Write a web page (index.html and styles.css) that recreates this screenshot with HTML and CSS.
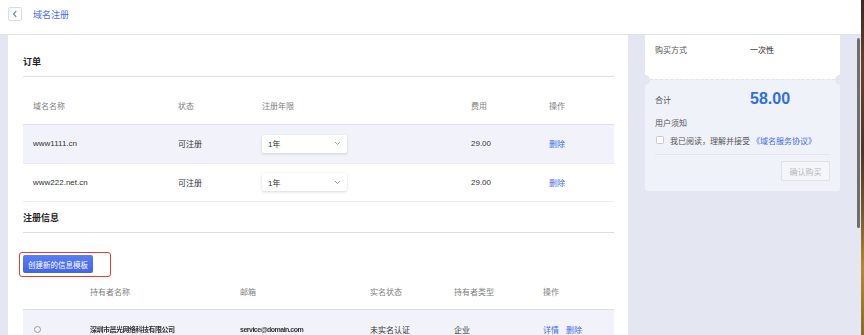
FILE: index.html
```html
<!DOCTYPE html>
<html lang="zh">
<head>
<meta charset="utf-8">
<title>域名注册</title>
<link rel="stylesheet" href="styles.css">
</head>
<body>
<div class="window">
  <header class="topbar">
    <span class="back">
      <svg width="6" height="8" viewBox="0 0 6 8"><path d="M4.3 1 L1.6 4 L4.3 7" fill="none" stroke="#5a6e9a" stroke-width="1.1"/></svg>
    </span>
    <span class="page-title">域名注册</span>
  </header>
  <div class="content">
    <main class="card">
      <section class="section">
        <h2 class="section-title">订单</h2>
        <div class="otable">
          <div class="orow ohead">
            <div class="cell">域名名称</div>
            <div class="cell">状态</div>
            <div class="cell">注册年限</div>
            <div class="cell">费用</div>
            <div class="cell">操作</div>
          </div>
          <div class="orow obody hl">
            <div class="cell">www1111.cn</div>
            <div class="cell">可注册</div>
            <div class="cell"><span class="select">1年<svg class="chev" width="7" height="5" viewBox="0 0 7 5"><path d="M1 1 L3.5 3.5 L6 1" fill="none" stroke="#999" stroke-width="0.9"/></svg></span></div>
            <div class="cell">29.00</div>
            <div class="cell"><a class="link">删除</a></div>
          </div>
          <div class="orow obody">
            <div class="cell">www222.net.cn</div>
            <div class="cell">可注册</div>
            <div class="cell"><span class="select">1年<svg class="chev" width="7" height="5" viewBox="0 0 7 5"><path d="M1 1 L3.5 3.5 L6 1" fill="none" stroke="#999" stroke-width="0.9"/></svg></span></div>
            <div class="cell">29.00</div>
            <div class="cell"><a class="link">删除</a></div>
          </div>
        </div>
      </section>
      <section class="section">
        <h2 class="section-title">注册信息</h2>
        <div class="btn-wrap">
          <button class="btn-primary">创建新的信息模板</button>
          <span class="mark"></span>
        </div>
        <div class="htable">
          <div class="hrow hhead">
            <div class="cell"></div>
            <div class="cell">持有者名称</div>
            <div class="cell">邮箱</div>
            <div class="cell">实名状态</div>
            <div class="cell">持有者类型</div>
            <div class="cell">操作</div>
          </div>
          <div class="hrow hbody hl">
            <div class="cell"><span class="radio"></span></div>
            <div class="cell"><span class="blur">深圳市晨光网络科技有限公司</span></div>
            <div class="cell"><span class="blur">service@domain.com</span></div>
            <div class="cell">未实名认证</div>
            <div class="cell">企业</div>
            <div class="cell"><a class="link">详情</a><a class="link">删除</a></div>
          </div>
        </div>
      </section>
    </main>
    <aside class="panel">
      <div class="panel-top">
        <div class="prow"><span class="plabel">购买方式</span><span class="pvalue">一次性</span></div>
      </div>
      <div class="panel-bottom">
        <div class="prow total"><span class="plabel">合计</span><span class="price">58.00</span></div>
        <div class="notice">用户须知</div>
        <label class="agree"><span class="checkbox"></span><span>我已阅读，理解并接受</span><a class="link agree-link">《域名服务协议》</a></label>
        <div class="actions"><button class="btn-disabled">确认购买</button></div>
      </div>
    </aside>
  </div>
  <span class="scrollbar"></span>
</div>
<div class="desktop"></div>
</body>
</html>
```

FILE: styles.css
```css
* { box-sizing: border-box; }
html, body { margin: 0; padding: 0; }
body {
  width: 864px;
  height: 335px;
  overflow: hidden;
  display: flex;
  font-family: "Liberation Sans", "Noto Sans CJK SC", sans-serif;
  font-size: 8px;
  color: #333;
}
.window {
  width: 861px;
  height: 335px;
  background: #e4e7f1;
  position: relative;
  display: flex;
  flex-direction: column;
}
.desktop {
  width: 3px;
  height: 335px;
  background: linear-gradient(180deg, #3a2a24 0%, #6b3e2a 20%, #4f3426 45%, #7a5a30 65%, #b38a2c 80%, #8a6a2a 100%);
}
.topbar {
  height: 35px;
  flex: none;
  background: #fff;
  border-bottom: 1px solid #dfe3ee;
  display: flex;
  align-items: flex-start;
  padding: 7px 0 0 8px;
  gap: 11px;
}
.back {
  width: 14px;
  height: 14px;
  border: 1px solid #d9dde8;
  border-radius: 2px;
  display: flex;
  align-items: center;
  justify-content: center;
}
.page-title {
  color: #4a6cf0;
  font-size: 9px;
  line-height: 14px;
  margin-top: 1px;
}
.content {
  flex: 1;
  display: flex;
  gap: 17px;
  padding-left: 8px;
  min-height: 0;
}
.card {
  width: 620px;
  background: #fff;
  padding: 11px 14px 0 15px;
}
.section-title {
  margin: 0;
  height: 31px;
  display: flex;
  align-items: center;
  font-size: 9px;
  font-weight: 700;
  color: #222;
  border-bottom: 1px solid #dcdfe8;
}
.otable { margin-top: 9px; }
.orow {
  display: grid;
  grid-template-columns: 145px 84px 209px 78px 1fr;
  align-items: center;
}
.hrow {
  display: grid;
  grid-template-columns: 57px 150px 130px 84px 89px 1fr;
  align-items: center;
}
.cell { padding-left: 10px; white-space: nowrap; }
.ohead, .hhead {
  height: 39px;
  color: #808080;
  border-bottom: 1px solid #dcdfe8;
}
.ohead { padding-top: 1px; }
.obody {
  height: 38.5px;
  border-bottom: 1px solid #eaecf2;
  color: #333;
}
.hl { background: #f2f3fa; }
.select {
  width: 85px;
  height: 18px;
  background: #fff;
  box-shadow: 0 1px 3px rgba(0, 0, 30, 0.15);
  border-radius: 2px;
  display: flex;
  align-items: center;
  justify-content: space-between;
  padding: 0 6px;
}
.chev { display: block; }
.link {
  color: #3d6be8;
  cursor: pointer;
}
.hrow .link + .link { margin-left: 7px; }
.btn-wrap {
  position: relative;
  margin-top: 22px;
  width: 70px;
  height: 18px;
}
.btn-primary {
  display: block;
  width: 70px;
  height: 18px;
  border: 0;
  border-radius: 2px;
  padding: 0;
  background: linear-gradient(180deg, #5a7ef5, #4164ea);
  color: #fff;
  font-family: inherit;
  font-size: 7.5px;
}
.mark {
  position: absolute;
  left: -4px;
  top: -3px;
  width: 92px;
  height: 25px;
  border: 1.5px solid #ef3a2a;
  border-radius: 3px;
}
.hhead { height: 37px; }
.hbody { height: 38px; }
.radio {
  display: inline-block;
  width: 7px;
  height: 7px;
  border: 1px solid #999;
  border-radius: 50%;
  margin-left: 1px;
  vertical-align: middle;
}
.blur {
  display: inline-block;
  filter: blur(0.7px);
  color: #333;
  font-weight: 700;
  letter-spacing: -0.5px;
  font-size: 7px;
}
.panel {
  width: 195px;
  align-self: flex-start;
  position: relative;
}
.panel-top {
  height: 44px;
  background: #fff;
  padding: 8px 10px 0;
}
.prow {
  display: flex;
  align-items: center;
  height: 12px;
}
.plabel { width: 95px; color: #555; }
.pvalue { color: #222; }
.panel-bottom {
  background: #f0f2f9;
  border-top: 1px dashed #e2e5ee;
  padding: 9px 10px 10px;
  border-radius: 0 0 3px 3px;
  position: relative;
}
.panel-bottom::before,
.panel-bottom::after {
  content: "";
  position: absolute;
  top: -5px;
  width: 10px;
  height: 10px;
  border-radius: 50%;
  background: #e4e7f1;
}
.panel-bottom::before { left: -5px; }
.panel-bottom::after { right: -5px; }
.total { height: 20px; }
.price {
  color: #2f6fe0;
  font-size: 16px;
  font-weight: 700;
}
.notice {
  margin-top: 9px;
  height: 12px;
  line-height: 12px;
  color: #555;
}
.agree {
  display: flex;
  align-items: center;
  height: 12px;
  margin-top: 4px;
  color: #555;
}
.checkbox {
  width: 8px;
  height: 8px;
  border: 1px solid #c4c8d2;
  border-radius: 1.5px;
  background: #fff;
  margin: 0 6px 0 1px;
}
.agree-link { margin-left: 2px; }
.actions {
  margin-top: 8px;
  border-top: 1px solid #e3e6ee;
  padding-top: 6px;
  display: flex;
  justify-content: flex-end;
}
.btn-disabled {
  width: 49px;
  height: 20px;
  border: 1px solid #dfe2ea;
  border-radius: 2px;
  background: #f5f6fa;
  color: #b5b8c0;
  font-family: inherit;
  font-size: 8px;
  padding: 0;
}
.scrollbar {
  position: absolute;
  left: 857px;
  top: 38px;
  width: 3px;
  height: 190px;
  border-radius: 2px;
  background: #6e6e6e;
}
```
